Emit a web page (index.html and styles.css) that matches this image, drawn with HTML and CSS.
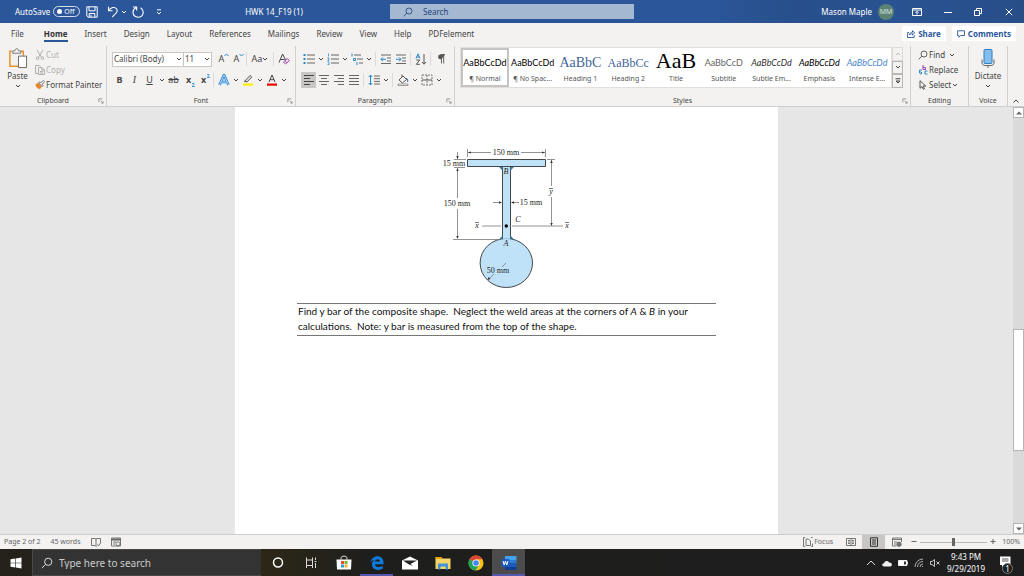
FILE: index.html
```html
<!DOCTYPE html>
<html lang="en">
<head>
<meta charset="utf-8">
<meta name="viewport" content="width=device-width, initial-scale=1">
<title>HWK 14_F19 (1) - Word</title>
<link rel="stylesheet" href="styles.css">
</head>
<body>
<svg class="sprite" aria-hidden="true">
  <symbol id="chev" viewBox="0 0 6 6"><path d="M1 2l2 2 2-2" fill="none" stroke="currentColor"/></symbol>
  <symbol id="launch" viewBox="0 0 7 7"><path d="M1 5V1h4M3 3l3 3M6 4v2H4" fill="none" stroke="currentColor" stroke-width=".8"/></symbol>
  <symbol id="lens" viewBox="0 0 12 12"><circle cx="7.2" cy="4.8" r="3.6" fill="none" stroke="currentColor"/><path d="M4.6 7.4L.8 11.2" stroke="currentColor"/></symbol>
</svg>

<header class="titlebar">
  <div class="quick">
    <label class="autosave"><span>AutoSave</span><span class="switch"><input type="checkbox" aria-label="AutoSave"><span>Off</span></span></label>
    <button class="qbtn" aria-label="Save"><svg class="i12" viewBox="0 0 12 12" fill="none" stroke="currentColor"><path d="M.8.8h10.4v10.4H2L.8 10zM3 .8v4h6v-4M3.2 11V7.5h5.6V11M5 9v2"/></svg></button>
    <button class="qbtn" aria-label="Undo"><svg class="i12" viewBox="0 0 12 12" fill="none" stroke="currentColor" stroke-width="1.1"><path d="M1.5.8v4h4M1.6 4.6C4 1 8 .6 9.7 3c1.6 2.4-.6 4.2-4.5 8"/></svg></button>
    <button class="qchev" aria-label="Undo list"><svg class="i6"><use href="#chev"/></svg></button>
    <button class="qbtn" aria-label="Redo"><svg class="i12" viewBox="0 0 12 12" fill="none" stroke="currentColor" stroke-width="1.1"><path d="M1 1h3.6v3.6M4.300 1.500C-.8 4 .3 11 6 11.200c5.500 0 7-6.500 2.600-9.400"/></svg></button>
    <button class="qbtn" aria-label="Customize toolbar"><svg class="i6" viewBox="0 0 6 6" fill="none" stroke="currentColor"><path d="M1 .8h4M1 3l2 2 2-2"/></svg></button>
    <span class="docname">HWK 14_F19 (1)</span>
  </div>
  <label class="search"><svg class="i10"><use href="#lens"/></svg><input type="search" placeholder="Search" aria-label="Search"></label>
  <div class="account">
    <span>Mason Maple</span><span class="avatar">MM</span>
    <div class="winbtns">
      <button aria-label="Ribbon display options"><svg class="i10" viewBox="0 0 10 10" fill="none" stroke="currentColor"><path d="M.5 1.500h9v7h-9zM.5 3h9M5 7.500v-3M3.500 5.800L5 4.300l1.500 1.500"/></svg></button>
      <button aria-label="Minimize"><svg class="i8" viewBox="0 0 8 8" stroke="currentColor"><path d="M0 4.500h8"/></svg></button>
      <button aria-label="Restore"><svg class="i8" viewBox="0 0 8 8" fill="none" stroke="currentColor"><path d="M.5 2.500h5v5h-5zM2.500 2.500v-2h5v5h-2"/></svg></button>
      <button aria-label="Close"><svg class="i8" viewBox="0 0 8 8" stroke="currentColor"><path d="M.8.8l6.400 6.400M7.200.8L.8 7.200"/></svg></button>
    </div>
  </div>
</header>

<nav class="tabs">
  <button>File</button><button class="current">Home</button><button>Insert</button><button>Design</button><button>Layout</button><button>References</button><button>Mailings</button><button>Review</button><button>View</button><button>Help</button><button>PDFelement</button>
  <div class="tabactions">
    <button><svg class="i8" viewBox="0 0 8 8" fill="none" stroke="currentColor" stroke-width=".9"><path d="M2 2.500H.6v5h6.600V5M2.500 5c.3-2 1.500-2.800 3-2.800V.6L7.600 3 5.500 5V3.700C4 3.700 3.200 4 2.500 5z"/></svg>Share</button>
    <button><svg class="i8" viewBox="0 0 8 8" fill="none" stroke="currentColor" stroke-width=".9"><path d="M.6.8h6.900v4.700H3.600L1.900 7.300V5.500H.6z"/></svg>Comments</button>
  </div>
</nav>

<section class="ribbon" aria-label="Home ribbon">
  <div class="group clipboard">
    <div class="body">
      <button class="big"><svg class="paste" viewBox="0 0 20 22" fill="none"><path d="M3.500 3.500h-2v15.700h8.500M13 3.500h2.500V8" stroke="#e8912d" stroke-width="1.600"/><path d="M4.500 5.500V3h2.200c.2-3 3.800-3 4 0h2.200v2.500z" fill="#f3f2f1" stroke="#777"/><path d="M10.500 8.500h8.500v12h-8.500z" fill="#fff" stroke="#666"/></svg><span>Paste</span><svg class="i6"><use href="#chev"/></svg></button>
      <div class="stack">
        <button class="off"><svg class="i10" viewBox="0 0 10 10" fill="none" stroke="currentColor"><path d="M2 0l4.500 7.200M8 0L3.500 7.200"/><circle cx="2.600" cy="8.200" r="1.300"/><circle cx="7.400" cy="8.200" r="1.300"/></svg>Cut</button>
        <button class="off"><svg class="i10" viewBox="0 0 10 10" fill="none" stroke="currentColor"><path d="M3 8.500H.5v-8h4L5.500 1.500M3.500 2.500h3.500l2.500 2.500v4.500h-6zM6.800 2.500V5h2.700M5 6.500h3M5 8h3"/></svg>Copy</button>
        <button><svg class="i10" viewBox="0 0 10 10"><path d="M.3 4.800l2.700-2 3.800 3.800-2 3L3.500 8.300 3 9 2 7.300l-.5.3z" fill="#e8862a"/><path d="M3.500 2.700l3.600 3.800 1-1L7 4.500 9.500 1.600 8.400.5 5.500 3l-1-1.200z" fill="#fff" stroke="#555" stroke-width=".8"/></svg>Format Painter</button>
      </div>
    </div>
    <div class="caption"><span>Clipboard</span><button aria-label="Clipboard options"><svg class="i6"><use href="#launch"/></svg></button></div>
  </div>

  <div class="group font">
    <div class="body rows">
      <div class="row">
        <div class="pick family"><select aria-label="Font"><option>Calibri (Body)</option></select><svg class="i6"><use href="#chev"/></svg></div>
        <div class="pick size"><select aria-label="Font size"><option>11</option></select><svg class="i6"><use href="#chev"/></svg></div>
        <button class="tool lead" aria-label="Grow font"><span class="glyph">A</span><svg class="mark" viewBox="0 0 5 4"><path d="M.5 3l2-2 2 2" fill="none" stroke="#2b88c8"/></svg></button>
        <button class="tool" aria-label="Shrink font"><span class="glyph">A</span><svg class="mark" viewBox="0 0 5 4"><path d="M.5 1l2 2 2-2" fill="none" stroke="#2b88c8"/></svg></button>
        <i class="rule"></i>
        <button class="tool case" aria-label="Change case"><span class="glyph">Aa</span><svg class="i6"><use href="#chev"/></svg></button>
        <i class="rule"></i>
        <button class="tool" aria-label="Clear formatting"><svg class="i12" viewBox="0 0 12 12" fill="none"><path d="M1 9.500L4.600 1l3 6M2.400 6.500h4" stroke="#444"/><path d="M5.500 9l3.800-3.400 2 2-3.800 3.400zM7 7.700l2 2" stroke="#a33db5"/></svg></button>
      </div>
      <div class="row">
        <button class="tool" aria-label="Bold"><b>B</b></button>
        <button class="tool" aria-label="Italic"><i class="it">I</i></button>
        <button class="tool" aria-label="Underline"><u>U</u></button>
        <button class="drop" aria-label="Underline style"><svg class="i6"><use href="#chev"/></svg></button>
        <button class="tool" aria-label="Strikethrough"><s>ab</s></button>
        <button class="tool" aria-label="Subscript"><b>x</b><svg class="mark low" viewBox="0 0 5 4"><path d="M1 .5h2v1.200L1 3.500h3" fill="none" stroke="#2b88c8" stroke-width=".8"/></svg></button>
        <button class="tool" aria-label="Superscript"><b>x</b><svg class="mark" viewBox="0 0 5 4"><path d="M1 .5h2v1.200L1 3.500h3" fill="none" stroke="#2b88c8" stroke-width=".8"/></svg></button>
        <i class="rule"></i>
        <button class="tool" aria-label="Text effects"><svg class="i12" viewBox="0 0 12 12" fill="none"><path d="M1.500 11L6 1l4.500 10M3 8h6" stroke="#2b88d8" stroke-width="2.600"/><path d="M1.500 11L6 1l4.500 10M3 8h6" stroke="#e9f4fc" stroke-width=".7"/></svg></button>
        <button class="drop" aria-label="Effects list"><svg class="i6"><use href="#chev"/></svg></button>
        <button class="tool" aria-label="Highlight"><svg class="i12" viewBox="0 0 12 12"><path d="M2.500 7.500L8 1.500l1.800 1.600L5 8zM2.500 5.800l2 2" fill="#ddd" stroke="#555" stroke-width=".9"/><path d="M1 9.500h10v2.200H1z" fill="#ffec00"/></svg></button>
        <button class="drop" aria-label="Highlight colours"><svg class="i6"><use href="#chev"/></svg></button>
        <button class="tool" aria-label="Font colour"><svg class="i12" viewBox="0 0 12 12"><path d="M3 8l3-7 3 7M4 5.700h4" fill="none" stroke="#444"/><path d="M1 9.500h10v2.200H1z" fill="#f00000"/></svg></button>
        <button class="drop" aria-label="Font colours"><svg class="i6"><use href="#chev"/></svg></button>
      </div>
    </div>
    <div class="caption"><span>Font</span><button aria-label="Font options"><svg class="i6"><use href="#launch"/></svg></button></div>
  </div>

  <div class="group paragraph">
    <div class="body rows">
      <div class="row">
        <button class="tool" aria-label="Bullets"><svg class="i12" viewBox="0 0 12 12"><path d="M4 2h8M4 6h8M4 10h8" stroke="#666"/><path d="M.5 1h2v2h-2zM.5 5h2v2h-2zM.5 9h2v2h-2z" fill="#2b88c8"/></svg></button>
        <button class="drop" aria-label="Bullet list"><svg class="i6"><use href="#chev"/></svg></button>
        <button class="tool" aria-label="Numbering"><svg class="i12" viewBox="0 0 12 12" fill="none"><path d="M4 2h8M4 6h8M4 10h8" stroke="#666"/><path d="M1.500.5v3M.5 5h1.500v1L.7 7.500h1.600M.5 9h1.500v2.500H.5" stroke="#2b88c8" stroke-width=".8"/></svg></button>
        <button class="drop" aria-label="Number list"><svg class="i6"><use href="#chev"/></svg></button>
        <button class="tool" aria-label="Multilevel list"><svg class="i12" viewBox="0 0 12 12" fill="none"><path d="M3 2h7M6 6h6M8 10h4" stroke="#666"/><path d="M1 .5v3M2.500 5.500h2v2h-2zM6 9v3" stroke="#2b88c8"/></svg></button>
        <button class="drop" aria-label="Multilevel styles"><svg class="i6"><use href="#chev"/></svg></button>
        <i class="rule"></i>
        <button class="tool" aria-label="Decrease indent"><svg class="i12" viewBox="0 0 12 12" fill="none"><path d="M1 2h10M7 5h4M7 8h4M1 10.500h10" stroke="#666"/><path d="M6 6.300H1M3 4.300l-2 2 2 2" stroke="#2b88c8"/></svg></button>
        <button class="tool" aria-label="Increase indent"><svg class="i12" viewBox="0 0 12 12" fill="none"><path d="M1 2h10M7 5h4M7 8h4M1 10.500h10" stroke="#666"/><path d="M1 6.300h5M4 4.300l2 2-2 2" stroke="#2b88c8"/></svg></button>
        <i class="rule"></i>
        <button class="tool" aria-label="Sort"><svg class="i12" viewBox="0 0 12 12" fill="none"><path d="M1 5.500L3 .8l2 4.700M1.800 4h2.500" stroke="#2b88c8"/><path d="M1.300 7h3.400l-3.400 4.300h3.600M9 1v10M7 9l2 2.200L11 9" stroke="#555"/></svg></button>
        <i class="rule"></i>
        <button class="tool" aria-label="Show marks"><svg class="i12" viewBox="0 0 12 12"><path d="M10 1.500H5.500a2.300 2.300 0 0 0 0 4.800h1z" fill="#555"/><path d="M6.500 1.500v9M8.700 1.500v9M5.500 1.500H10" stroke="#555" stroke-width=".9" fill="none"/></svg></button>
      </div>
      <div class="row">
        <button class="tool on" aria-label="Align left"><svg class="i12" viewBox="0 0 12 12" stroke="#444"><path d="M1 1.500h10M1 4.500h6M1 7.500h10M1 10.500h6"/></svg></button>
        <button class="tool" aria-label="Centre"><svg class="i12" viewBox="0 0 12 12" stroke="#666"><path d="M1 1.500h10M3 4.500h6M1 7.500h10M3 10.500h6"/></svg></button>
        <button class="tool" aria-label="Align right"><svg class="i12" viewBox="0 0 12 12" stroke="#666"><path d="M1 1.500h10M5 4.500h6M1 7.500h10M5 10.500h6"/></svg></button>
        <button class="tool" aria-label="Justify"><svg class="i12" viewBox="0 0 12 12" stroke="#666"><path d="M1 1.500h10M1 4.500h10M1 7.500h10M1 10.500h10"/></svg></button>
        <i class="rule"></i>
        <button class="tool" aria-label="Line spacing"><svg class="i12" viewBox="0 0 12 12" fill="none"><path d="M6 2h6M6 4.700h6M6 7.400h6M6 10h6" stroke="#666"/><path d="M2.500 1v10M.8 3l1.700-2 1.700 2M.8 9l1.700 2 1.700-2" stroke="#2b88c8"/></svg></button>
        <button class="drop" aria-label="Spacing list"><svg class="i6"><use href="#chev"/></svg></button>
        <i class="rule"></i>
        <button class="tool" aria-label="Shading"><svg class="i12" viewBox="0 0 12 12" fill="none"><path d="M2 6l4-4 3.500 3.500-4 3.500zM5 3V.5" stroke="#555"/><path d="M9 4c2 1 2 3 1.500 4" stroke="#2b6fa8"/><path d="M1 10h10v1.500H1z" fill="#fff" stroke="#777" stroke-width=".7"/></svg></button>
        <button class="drop" aria-label="Shading colours"><svg class="i6"><use href="#chev"/></svg></button>
        <button class="tool" aria-label="Borders"><svg class="i12" viewBox="0 0 12 12" fill="none"><path d="M1 1h10v10H1zM6 1v10" stroke="#777" stroke-dasharray="2 1"/><path d="M1 6h10" stroke="#555"/></svg></button>
        <button class="drop" aria-label="Border list"><svg class="i6"><use href="#chev"/></svg></button>
      </div>
    </div>
    <div class="caption"><span>Paragraph</span><button aria-label="Paragraph options"><svg class="i6"><use href="#launch"/></svg></button></div>
  </div>

  <div class="group styles">
    <div class="body">
      <div class="gallery">
        <button class="tile picked"><span class="sample">AaBbCcDd</span><span class="name">¶ Normal</span></button>
        <button class="tile"><span class="sample">AaBbCcDd</span><span class="name">¶ No Spac...</span></button>
        <button class="tile"><span class="sample h1">AaBbC</span><span class="name">Heading 1</span></button>
        <button class="tile"><span class="sample h2">AaBbCc</span><span class="name">Heading 2</span></button>
        <button class="tile"><span class="sample title">AaB</span><span class="name">Title</span></button>
        <button class="tile"><span class="sample subtitle">AaBbCcD</span><span class="name">Subtitle</span></button>
        <button class="tile"><span class="sample subtle">AaBbCcDd</span><span class="name">Subtle Em...</span></button>
        <button class="tile"><span class="sample emph">AaBbCcDd</span><span class="name">Emphasis</span></button>
        <button class="tile"><span class="sample intense">AaBbCcDd</span><span class="name">Intense E...</span></button>
      </div>
      <div class="spin">
        <button class="dim" aria-label="Previous row"><svg class="i6" viewBox="0 0 6 6" fill="none" stroke="currentColor"><path d="M1 4l2-2 2 2"/></svg></button>
        <button aria-label="Next row"><svg class="i6"><use href="#chev"/></svg></button>
        <button aria-label="More styles"><svg class="i6" viewBox="0 0 6 6" fill="none" stroke="currentColor"><path d="M.5.8h5M1 3l2 2 2-2z"/></svg></button>
      </div>
    </div>
    <div class="caption"><span>Styles</span><button aria-label="Styles options"><svg class="i6"><use href="#launch"/></svg></button></div>
  </div>

  <div class="group editing">
    <div class="body">
      <div class="stack">
        <button><svg class="i10"><use href="#lens"/></svg>Find<svg class="i6 far"><use href="#chev"/></svg></button>
        <button><svg class="i10" viewBox="0 0 10 10" fill="none"><path d="M5 0v4.500h2.500V2.500H5" stroke="#a33db5"/><path d="M4 5H1.500v3H4M2.500 6.500l1.500 1.500-1.500 1.500M9.500 6H7v3h2.500" stroke="#2b88c8"/></svg>Replace</button>
        <button><svg class="i10" viewBox="0 0 10 10" fill="none" stroke="currentColor" stroke-width=".9"><path d="M2 .7v7.600l2-1.800 1.300 2.800 1.200-.6-1.300-2.600h2.600z"/></svg>Select<svg class="i6"><use href="#chev"/></svg></button>
      </div>
    </div>
    <div class="caption"><span>Editing</span></div>
  </div>

  <div class="group voice">
    <div class="body">
      <button class="big"><svg class="mic" viewBox="0 0 14 20" fill="none"><rect x="3" y="1" width="8" height="14" rx="1" fill="#83beec" stroke="#2f7dc0"/><path d="M1 11v3.500c0 2 2 2.500 3 2.500h6c2 0 3-1 3-2.500V11M7 17v2.500" stroke="#666"/></svg><span>Dictate</span><svg class="i6"><use href="#chev"/></svg></button>
    </div>
    <div class="caption"><span>Voice</span></div>
  </div>
  <div class="fold"><button aria-label="Collapse ribbon"><svg class="i6" viewBox="0 0 6 6" fill="none" stroke="currentColor"><path d="M.5 4.500L3 2l2.500 2.500"/></svg></button></div>
</section>

<main class="workspace">
  <div class="canvas">
    <article class="page">
      <svg class="figure" viewBox="427 140 160 155" role="img" aria-label="Composite beam section">
        <g stroke="#333" stroke-width=".9">
          <path d="M467.500 159.500h78v7h-78z" fill="#bfe2f8"/>
          <ellipse cx="506.300" cy="263" rx="26.200" ry="24.500" fill="#bfe2f8"/>
          <path d="M502.500 166.500v72.300M510.500 166.500v72.300" fill="none"/>
        </g>
        <path d="M503 167h7v73h-7z" fill="#bfe2f8"/>
        <path d="M499 167h3.500v3.500zM514 167h-3.500v3.500zM499 239.500l3.500-4v3.500zM514 239.500l-3.500-4v3.500z" fill="#2f7f9e"/>
        <path d="M502.500 239q4-1 8 0" fill="none" stroke="#7fa9c0" stroke-width=".6"/>
        <g stroke="#777" stroke-width=".8" fill="none">
          <path d="M467.500 149v8M545.500 149v8M468 152.500h23M521 152.500h24"/>
          <path d="M457.500 152v7M454 159.500h12M454 167.500h11M457.500 168v30M457.500 209v29M453 239.500h47"/>
          <path d="M493 202.500h8M512 202.500h7M482 226h19M512 226h51M547 159.500h8M551.500 160v26M551.500 197v28"/>
          <path d="M506 263l-4 4M494 274l-5 5"/>
        </g>
        <path d="M468 152.500l3-1v2zM545 152.500l-3-1v2zM457.500 159l-1.200-3h2.400zM457.500 168l-1.200 3h2.400zM457.500 239l-1.200-3h2.400zM502 202.500l-3-1.200v2.400zM511 202.500l3-1.200v2.400zM551.500 160l-1.200 3h2.400zM551.500 226l-1.200-3h2.400zM487.500 280l1-3 2 2z" fill="#333"/>
        <circle cx="506.300" cy="226" r="1.700" fill="#000"/>
        <g class="dims">
          <text x="506" y="155">150 mm</text><text x="454" y="166">15 mm</text><text x="457" y="206">150 mm</text><text x="531" y="205">15 mm</text><text x="498" y="273">50 mm</text>
          <g font-style="italic"><text x="506" y="174">B</text><text x="506" y="246">A</text><text x="518" y="222">C</text><text x="477" y="228">x</text><text x="567" y="228">x</text><text x="551" y="194">y</text></g>
        </g>
        <path d="M475 222.500h4M565 222.500h4M549 188.500h4" stroke="#444" stroke-width=".7"/>
      </svg>
      <p class="problem">Find y bar of the composite shape.&nbsp; Neglect the weld areas at the corners of <em>A</em> &amp; <em>B</em> in your calculations.&nbsp; Note: y bar is measured from the top of the shape.</p>
    </article>
  </div>
  <div class="scroller">
    <button aria-label="Scroll up"><svg class="i6" viewBox="0 0 6 6"><path d="M0 4.500h6L3 1.500z" fill="#666"/></svg></button>
    <div class="track"><div class="thumb"></div></div>
    <button aria-label="Scroll down"><svg class="i6" viewBox="0 0 6 6"><path d="M0 1.500h6L3 4.500z" fill="#666"/></svg></button>
  </div>
</main>

<footer class="status">
  <span>Page 2 of 2</span><span>45 words</span>
  <button aria-label="Proofing"><svg class="i10" viewBox="0 0 10 10" fill="none" stroke="currentColor" stroke-width=".9"><path d="M5 1.500v8L4 8.500H.5v-7H4l1 .8 1-.8h3.500V6M6.500 7.500l1 1.500 2-3"/></svg></button>
  <button aria-label="Macros"><svg class="i10" viewBox="0 0 10 10" fill="none" stroke="currentColor" stroke-width=".9"><path d="M.5 1h9v8h-9z"/><path d="M.5 2.500h9" stroke-width="2"/><path d="M2 5h3M2 7h2"/><circle cx="7" cy="6.800" r="2"/></svg></button>
  <div class="views">
    <button class="focus"><svg class="i10" viewBox="0 0 10 10" fill="none" stroke="currentColor" stroke-width=".9"><path d="M2 .5H.5v9H2M8 .5h1.500M8 9.500h1.500v-3M3 2h2.500L7.500 4v4.500H3z"/></svg>Focus</button>
    <button class="view" aria-label="Read mode"><svg class="i10" viewBox="0 0 10 10" fill="none" stroke="currentColor" stroke-width=".9"><path d="M5 1.500v7.500M.5 1.500h9v7h-9zM2 3.500h2M2 5h2M2 6.500h2M6 3.500h2M6 5h2M6 6.500h2"/></svg></button>
    <button class="view on" aria-label="Print layout"><svg class="i10" viewBox="0 0 10 10" fill="none" stroke="#333"><path d="M1.500.8h7v8.500h-7zM3 3h4M3 5h4M3 7h4"/></svg></button>
    <button class="view" aria-label="Web layout"><svg class="i10" viewBox="0 0 10 10" fill="none" stroke="currentColor" stroke-width=".9"><path d="M4.500 9h-4V1h9v4M.5 2.500h9M2 5h3M2 7h2"/><circle cx="7" cy="7.200" r="2.200" fill="#777"/></svg></button>
    <button class="zoom" aria-label="Zoom out"><svg class="i6" viewBox="0 0 6 6" stroke="currentColor"><path d="M.5 2.500h5"/></svg></button>
    <input type="range" min="0" max="100" value="50" aria-label="Zoom">
    <button class="zoom" aria-label="Zoom in"><svg class="i6" viewBox="0 0 6 6" stroke="currentColor"><path d="M.5 2.500h5M3 0v5"/></svg></button>
    <span>100%</span>
  </div>
</footer>

<footer class="taskbar">
  <button class="start" aria-label="Start"><svg class="i12" viewBox="0 0 12 12" fill="#fff"><path d="M.5 2.200L5.300 1.500v4.200H.5zM5.900 1.400L11.500.6v5.100H5.900zM.5 6.300h4.800v4.200L.5 9.800zM5.900 6.300h5.600v5.100l-5.600-.8z"/></svg></button>
  <label class="find"><svg class="i12"><use href="#lens"/></svg><input type="search" placeholder="Type here to search" aria-label="Type here to search"></label>
  <button class="app" aria-label="Cortana"><svg class="i16" viewBox="0 0 16 16"><circle cx="8" cy="7.500" r="4.500" fill="none" stroke="#fff" stroke-width="1.500"/></svg></button>
  <button class="app" aria-label="Task view"><svg class="i16" viewBox="0 0 16 16" fill="none" stroke="#ddd"><path d="M3.500 2.500v2.500h6V2.500M3.500 13v-2.500h6V13M3.500 5v5.500M9.500 5v5.500M12.500 2.500v2.500M12.500 8v5M11.500 6.500h2"/></svg></button>
  <button class="app" aria-label="Store"><svg class="i16" viewBox="0 0 16 16"><path d="M5 4.500V3c0-2.500 6-2.500 6 0v1.500" fill="none" stroke="#ddd"/><path d="M.5 4.500h15L15 14.500H1z" fill="#fff"/><path d="M5 6h3v3H5z" fill="#e8502c"/><path d="M8.500 6h3v3h-3z" fill="#7db32c"/><path d="M5 9.500h3v3H5z" fill="#2ba0de"/><path d="M8.500 9.500h3v3h-3z" fill="#f2b52b"/></svg></button>
  <button class="app open" aria-label="Edge"><svg class="i16" viewBox="0 0 16 16"><path d="M1.500 7.500C3-1 14.500-.8 14.500 7.500V9.200H6c.2 3.300 5 3.500 7.700 1.700v2.900C8 16.500 2.500 14 3 8.800c.2-2 1.500-3.500 3-4.300C4 4.800 2.500 6 1.500 7.500zM6 6.500h5C11 3.400 6.500 3.400 6 6.500z" fill="#0f7bdc"/></svg></button>
  <button class="app" aria-label="Mail"><svg class="i16" viewBox="0 0 16 16"><path d="M0 5.500L8 1.500l8 4v9H0z" fill="#fff"/><path d="M1 5.500h14L8.500 9l2.500 2-4-1.500z" fill="#222"/></svg></button>
  <button class="app" aria-label="File Explorer"><svg class="i16" viewBox="0 0 16 16"><path d="M.5 2h5.500l1.500 1.500h8v10.500H.5z" fill="#f7d468"/><path d="M.5 2h5.500l1.500 2h-7z" fill="#e5a50a"/><path d="M3 8.500h10v6h-2.500v-3h-5v3H3z" fill="#3f93d6"/></svg></button>
  <button class="app" aria-label="Chrome"><svg class="i16" viewBox="0 0 16 16"><circle cx="8" cy="8" r="7.500" fill="#fbc116"/><path d="M8 8L1.500 4.300A7.500 7.500 0 0 1 14.500 4.300H8z" fill="#db4437"/><path d="M8 8L1.500 4.300A7.500 7.500 0 0 0 7.500 15.500L11 10z" fill="#1da15c"/><circle cx="8" cy="8" r="3.600" fill="#fff"/><circle cx="8" cy="8" r="2.800" fill="#4285f4"/></svg></button>
  <button class="app open active" aria-label="Word"><svg class="i16" viewBox="0 0 16 16"><path d="M4 1h11.500v4H4z" fill="#41a5ee"/><path d="M4 5h11.500v3.500H4z" fill="#2b7cd3"/><path d="M4 8.500h11.500V12H4z" fill="#185abd"/><path d="M4 12h11.500v3H4z" fill="#103f91"/><path d="M.5 4h8v8h-8z" fill="#185abd"/><path d="M2 6l1.200 4 1.300-4 1.300 4L7 6" fill="none" stroke="#fff"/></svg></button>
  <div class="tray">
    <button aria-label="Hidden icons"><svg class="i10" viewBox="0 0 10 10" fill="none" stroke="#ddd"><path d="M1 7l4-4 4 4"/></svg></button>
    <button aria-label="OneDrive"><svg class="i10" viewBox="0 0 10 10"><path d="M2 8.500C-.5 8-.2 5.500 2 5.300 2.500 2.500 6 2 7.200 4.500c3-.3 3.700 3.500 1 4z" fill="#eee"/></svg></button>
    <button aria-label="Battery"><svg class="i10" viewBox="0 0 10 10"><path d="M.5 2.500h8.500v5H.5z" fill="#fff" stroke="#eee"/><path d="M6 3.500h2v3H6z" fill="#333"/><path d="M9.600 4v2" stroke="#eee"/></svg></button>
    <button aria-label="Wi-Fi"><svg class="i10" viewBox="0 0 10 10" fill="none" stroke="#bbb" stroke-width=".9"><path d="M1 9A8 8 0 0 1 9 1M3.500 9A5.500 5.500 0 0 1 9 3.500M6 9a3 3 0 0 1 3-3M8 9l1-1"/></svg></button>
    <button aria-label="Muted"><svg class="i10" viewBox="0 0 10 10" fill="none" stroke="#ddd" stroke-width=".9"><path d="M.5 3.500h1.500L4.500 1.500v7L2 6.500H.5zM6.500 3.500l3 3M9.500 3.500l-3 3"/></svg></button>
    <div class="clock"><span>9:43 PM</span><span>9/29/2019</span></div>
    <button class="notes" aria-label="Notifications"><svg class="i16" viewBox="0 0 16 16"><path d="M1 1.500h10.500v8.500H5l-2 2V10H1z" fill="#fff"/><path d="M3 4h6.500M3 6h6.500" stroke="#555"/></svg><span class="count">1</span></button>
  </div>
</footer>
</body>
</html>
```

FILE: styles.css
```css
* { box-sizing: border-box; }
body {
  margin: 0;
  height: 100vh;
  display: flex;
  flex-direction: column;
  overflow: hidden;
  background: #f3f2f1;
  color: #444;
  font: 8px/12px "Noto Sans", "Open Sans", sans-serif;
}
button, input, select { font: inherit; color: inherit; border: 0; padding: 0; margin: 0; background: none; }
button { display: flex; align-items: center; justify-content: center; white-space: nowrap; }
svg { flex: none; display: block; }
.sprite { position: absolute; width: 0; height: 0; }
.i6 { width: 6px; height: 6px; }
.i8 { width: 8px; height: 8px; }
.i10 { width: 10px; height: 10px; }
.i12 { width: 12px; height: 12px; }
.i16 { width: 16px; height: 16px; }

/* Title bar */
.titlebar {
  flex: none;
  height: 23px;
  display: grid;
  grid-template-columns: 1fr 244px 1fr;
  align-items: center;
  background: linear-gradient(90deg, #2b579a 0 68%, #284f8b 78%, #2a5393 88%, #284e88);
  color: #fff;
}
.quick { display: flex; align-items: center; padding-left: 15px; }
.autosave { display: flex; align-items: center; gap: 3px; width: 65px; }
.switch {
  display: flex;
  align-items: center;
  gap: 2px;
  width: 27px;
  height: 11px;
  padding-left: 3px;
  border: 1px solid #d5deeb;
  border-radius: 6px;
  font-size: 7px;
}
.switch input { appearance: none; width: 5px; height: 5px; border-radius: 50%; background: #fff; }
.qbtn { width: 18px; height: 20px; margin-left: 3px; }
.qchev { width: 7px; height: 20px; }
.qbtn + .qchev { margin-left: -2px; }
.qchev + .qbtn { margin-left: 2px; }
.docname { margin-left: auto; margin-right: 87px; }
.search {
  display: flex;
  align-items: center;
  gap: 10px;
  height: 15px;
  padding-left: 13px;
  background: #a4b8d2;
  color: #24467c;
}
.search input, .find input { flex: 1; min-width: 0; outline: 0; }
.search input::placeholder { color: #24467c; opacity: 1; }
.account { display: flex; align-items: center; justify-content: flex-end; }
.avatar {
  width: 16px;
  height: 16px;
  margin: 0 8px 0 6px;
  border-radius: 50%;
  background: #5b8374;
  color: #d5e0dc;
  font-size: 7px;
  line-height: 16px;
  text-align: center;
}
.winbtns { display: grid; grid-template-columns: repeat(4, 1fr); width: 122px; height: 23px; }

/* Tabs */
.tabs { flex: none; display: flex; align-items: flex-start; gap: 1px; height: 23px; padding: 2px 0 0 3px; }
.tabs > button { height: 17px; padding: 0 8px; }
.tabs > .current { margin-left: 3px; color: #333; font-weight: 700; background: linear-gradient(#2b579a, #2b579a) 8px 100% / calc(100% - 16px) 2px no-repeat; }
.tabactions { display: flex; gap: 6px; margin-left: auto; padding: 1px 8px 0 0; }
.tabactions button { height: 15px; gap: 3px; padding: 0 5px; background: #fff; color: #2b579a; font-weight: 700; }

/* Ribbon */
.ribbon { flex: none; display: flex; height: 61px; border-bottom: 1px solid #d0cecd; }
.group { display: flex; flex-direction: column; flex: none; border-right: 1px solid #d2d0ce; }
.clipboard { width: 107px; }
.font { width: 189px; }
.paragraph { width: 159px; }
.styles { flex: 1; min-width: 0; }
.editing { width: 58px; }
.voice { width: 39px; }
.body { flex: 1; display: flex; min-height: 0; }
.caption { display: flex; align-items: center; height: 11px; font-size: 7px; line-height: 11px; }
.caption span { flex: 1; text-align: center; }
.clipboard .caption { padding-left: 0; }
.caption button { width: 10px; height: 10px; margin-left: -10px; color: #777; }
.big { flex-direction: column; justify-content: flex-start; width: 35px; padding-top: 2px; gap: 1px; }
.paste { width: 20px; height: 21px; }
.mic { width: 14px; height: 21px; }
.voice .big { width: 38px; }
.stack { display: flex; flex-direction: column; padding-top: 1px; }
.stack button { justify-content: flex-start; gap: 1px; height: 15px; }
.off { color: #b1afad; }
.rows { flex-direction: column; padding: 3px 0 0 5px; gap: 1px; }
.row { display: flex; align-items: center; height: 20px; }
.pick { display: flex; align-items: center; height: 15px; border: 1px solid #c8c6c4; background: #fff; padding-right: 1px; }
.pick select { appearance: none; flex: 1; min-width: 0; padding-left: 1px; }
.family { width: 72px; }
.size { width: 29px; margin-left: -1px; }
.tool { position: relative; width: 15px; height: 16px; font-size: 9px; }
.tool.lead { margin-left: 2px; }
.tool.case { width: 22px; }
.it { font-family: "Liberation Serif", serif; font-size: 10px; }
.mark { position: absolute; top: 2px; right: 0; width: 5px; height: 4px; }
.mark.low { top: 11px; }
.drop { width: 9px; height: 16px; }
.on { background: #c8c6c4; }
.rule { width: 1px; height: 14px; margin: 0 2px; background: #dcdad8; }

.styles .body { padding: 1px 7px 7px 5px; align-items: stretch; }
.gallery { flex: 1; min-width: 0; display: grid; grid-template-columns: repeat(9, 1fr); background: #fff; border: 1px solid #e1dfdd; }
.tile { flex-direction: column; justify-content: flex-end; min-width: 0; padding: 0 0 1px; }
.picked { outline: 2px solid #c6c4c2; outline-offset: -2px; }
.sample { height: 18px; color: #000; font: 9px/18px Lato, sans-serif; }
.sample.h1 { color: #41659a; font: 14px/18px "Liberation Serif", serif; }
.sample.h2 { color: #41659a; font: 12px/18px "Liberation Serif", serif; }
.sample.title { height: 22px; font: 22px/22px "Liberation Serif", serif; }
.sample.subtitle { color: #666; }
.sample.subtle { color: #333; font-style: italic; }
.sample.emph { font-style: italic; }
.sample.intense { color: #4a86cc; font-style: italic; }
.name { font-size: 7px; line-height: 14px; color: #555; }
.spin { display: grid; grid-template-rows: repeat(3, 1fr); width: 11px; }
.spin button { border: 1px solid #b9b7b5; }
.spin .dim { color: #bbb; border-color: #dddbd9; }
.editing .stack { padding-left: 7px; }
.far { margin-left: 3px; }
.fold { display: flex; align-items: flex-end; justify-content: center; width: 16px; padding-bottom: 2px; }

/* Document */
.workspace { flex: 1; display: flex; min-height: 0; background: #e6e6e6; }
.canvas { flex: 1; display: flex; justify-content: center; }
.page { width: 543px; max-width: 100%; padding: 33px 62px 0; background: #fff; }
.figure { width: 160px; height: 155px; margin: 0 auto; }
.dims { font: 8px "Liberation Serif", serif; fill: #222; text-anchor: middle; }
.problem {
  margin: 8px 0 0;
  padding: 0 1px 1px;
  border: solid #777;
  border-width: 1px 0;
  color: #111;
  font: 10px/15px Lato, sans-serif;
}
.scroller { display: flex; flex-direction: column; width: 11px; background: #dadada; }
.scroller button { height: 11px; border: 1px solid #b5b5b5; background: #fff; }
.track { flex: 1; display: flex; flex-direction: column; }
.track::before { content: ""; flex: 212; }
.track::after { content: ""; flex: 72; }
.thumb { flex: 121; background: #fff; border: 1px solid #b5b5b5; }

/* Status bar */
.status { flex: none; display: flex; align-items: center; height: 15px; padding: 0 4px; gap: 10px; border-top: 1px solid #d0cecd; font-size: 7px; color: #666; }
.views { display: flex; align-items: center; margin-left: auto; height: 14px; }
.focus { gap: 1px; margin-right: 6px; }
.view { width: 23px; height: 14px; }
.zoom { width: 12px; height: 14px; }
.views input { appearance: none; width: 67px; height: 12px; background: linear-gradient(#bbb, #bbb) 0 50% / 100% 1px no-repeat; }
.views input::-webkit-slider-thumb { appearance: none; width: 3px; height: 8px; background: #666; }
.views span { margin-left: 3px; }

/* Taskbar */
.taskbar { flex: none; display: flex; align-items: stretch; height: 27px; background: linear-gradient(90deg, #24211a, #2b2618 27%, #1e1e1d 36%, #1e1e1e); color: #fff; }
.start { width: 32px; }
.find { display: flex; align-items: center; gap: 6px; width: 229px; padding-left: 8px; background: #333; border: 1px solid #484848; border-right: 0; color: #ddd; font-size: 10px; }
.find input::placeholder { color: #ccc; opacity: 1; }
.app { width: 33px; }
.open { box-shadow: inset 0 -2px #5558af; }
.active { background: #4c4c4c; }
.tray { display: flex; align-items: center; margin-left: auto; }
.tray button { width: 16px; height: 27px; }
.clock { display: flex; flex-direction: column; width: 46px; text-align: center; }
.tray .notes { position: relative; width: 35px; }
.count { position: absolute; right: 11px; bottom: 2px; width: 11px; height: 11px; border: 1px solid #777; border-radius: 50%; background: #1e1e1e; line-height: 9px; }
```
